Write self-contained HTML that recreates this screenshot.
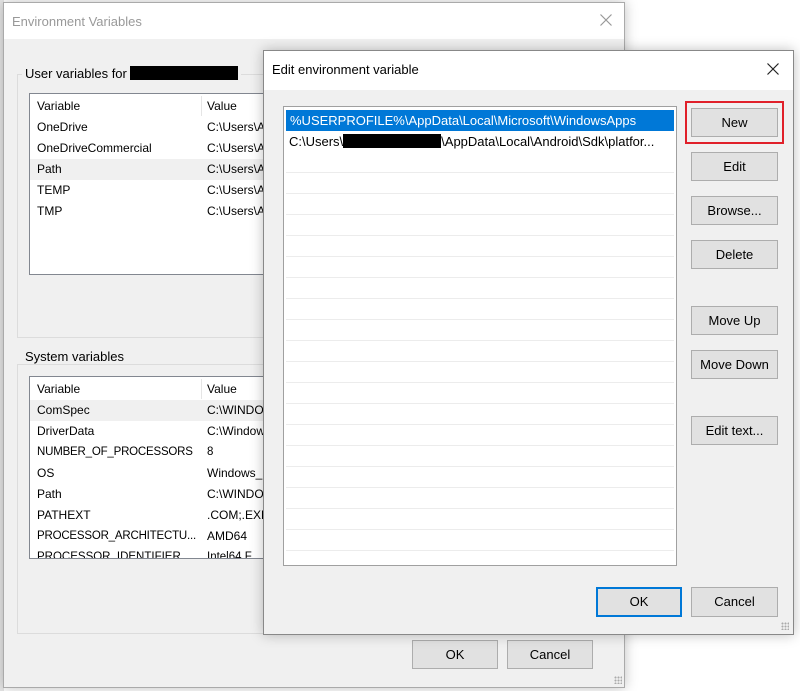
<!DOCTYPE html>
<html><head><meta charset="utf-8"><style>
*{box-sizing:border-box;margin:0;padding:0}
body{width:800px;height:691px;background:#fff;position:relative;overflow:hidden;font-family:"Liberation Sans",sans-serif;font-size:12px;color:#000}
.abs{position:absolute}
.win{background:#f0f0f0;border:1px solid #aaa;box-shadow:0 0 12px rgba(0,0,0,.25)}
.title{position:absolute;left:0;right:0;top:0;background:#fff}
.btn{position:absolute;background:#e1e1e1;border:1px solid #adadad;text-align:center;font-size:13px}
.list{position:absolute;background:#fff;border:1px solid #828790;overflow:hidden}
.row{position:absolute;left:0;right:0;height:21px;line-height:21px;white-space:nowrap}
.grp{position:absolute;border:1px solid #dcdcdc}
.lbl{position:absolute;background:#f0f0f0;padding:0 3px;font-size:13px}
.grip{position:absolute;width:8px;height:8px;background:radial-gradient(circle,#aaa 0.8px,transparent 1.2px) 0 0/3px 3px}
</style></head><body>
<div class="abs" style="left:0;top:0;width:4px;height:691px;background:#e6e6e6"></div>

<!-- back window -->
<div class="abs win" style="left:3px;top:2px;width:622px;height:686px">
  <div class="title" style="height:36px">
    <div class="abs" style="left:8px;top:11px;font-size:13px;color:#999">Environment Variables</div>
    <svg class="abs" style="left:596px;top:11px" width="12" height="12"><path d="M0.5 0.5L11.5 11.5M11.5 0.5L0.5 11.5" stroke="#999" stroke-width="1.2"/></svg>
  </div>
  <div class="grp" style="left:13px;top:71px;width:600px;height:264px"></div>
  <div class="lbl" style="left:18px;top:63px">User variables for <span style="display:inline-block;width:108px;height:14px;background:#000;vertical-align:-2px"></span></div>
  <div class="list" style="left:25px;top:90px;width:300px;height:182px">
    <div class="row" style="top:2px;padding-left:7px">Variable</div>
    <div class="abs" style="left:171px;top:2px;width:1px;height:20px;background:#e5e5e5"></div>
    <div class="row" style="top:2px;left:177px">Value</div>
    <div class="row" style="top:23px;padding-left:7px">OneDrive<span class="abs" style="left:177px">C:\Users\A</span></div>
    <div class="row" style="top:44px;padding-left:7px">OneDriveCommercial<span class="abs" style="left:177px">C:\Users\A</span></div>
    <div class="row" style="top:65px;padding-left:7px;background:#f0f0f0">Path<span class="abs" style="left:177px">C:\Users\A</span></div>
    <div class="row" style="top:86px;padding-left:7px">TEMP<span class="abs" style="left:177px">C:\Users\A</span></div>
    <div class="row" style="top:107px;padding-left:7px">TMP<span class="abs" style="left:177px">C:\Users\A</span></div>
  </div>
  <div class="grp" style="left:13px;top:361px;width:600px;height:270px"></div>
  <div class="lbl" style="left:18px;top:346px">System variables</div>
  <div class="list" style="left:25px;top:373px;width:300px;height:183px">
    <div class="row" style="top:2px;padding-left:7px">Variable</div>
    <div class="abs" style="left:171px;top:2px;width:1px;height:20px;background:#e5e5e5"></div>
    <div class="row" style="top:2px;left:177px">Value</div>
    <div class="row" style="top:23px;padding-left:7px;background:#f0f0f0">ComSpec<span class="abs" style="left:177px">C:\WINDO</span></div>
    <div class="row" style="top:44px;padding-left:7px">DriverData<span class="abs" style="left:177px">C:\Window</span></div>
    <div class="row" style="top:65px;padding-left:7px;font-size:11.5px;letter-spacing:-0.2px">NUMBER_OF_PROCESSORS<span class="abs" style="left:177px">8</span></div>
    <div class="row" style="top:86px;padding-left:7px">OS<span class="abs" style="left:177px">Windows_</span></div>
    <div class="row" style="top:107px;padding-left:7px">Path<span class="abs" style="left:177px">C:\WINDO</span></div>
    <div class="row" style="top:128px;padding-left:7px">PATHEXT<span class="abs" style="left:177px">.COM;.EXE</span></div>
    <div class="row" style="top:149px;padding-left:7px;font-size:11.5px;letter-spacing:-0.2px">PROCESSOR_ARCHITECTU...<span class="abs" style="left:177px;font-size:12px;letter-spacing:0">AMD64</span></div>
    <div class="row" style="top:170px;padding-left:7px;font-size:11.5px">PROCESSOR_IDENTIFIER<span class="abs" style="left:177px">Intel64 F</span></div>
  </div>
  <div class="btn" style="left:408px;top:637px;width:86px;height:29px;line-height:27px">OK</div>
  <div class="btn" style="left:503px;top:637px;width:86px;height:29px;line-height:27px">Cancel</div>
  <div class="grip" style="left:610px;top:673px"></div>
</div>

<!-- front dialog -->
<div class="abs win" style="left:263px;top:50px;width:531px;height:585px;border-color:#888">
  <div class="title" style="height:39px">
    <div class="abs" style="left:8px;top:11px;font-size:13px">Edit environment variable</div>
    <svg class="abs" style="left:503px;top:12px" width="12" height="12"><path d="M0.5 0.5L11.5 11.5M11.5 0.5L0.5 11.5" stroke="#222" stroke-width="1.2"/></svg>
  </div>
  <div class="list" style="left:19px;top:55px;width:394px;height:460px;border-color:#a0a0a0">
    <div class="row" style="top:3px;left:2px;right:2px;background:#0078d7;color:#fff;padding-left:4px;font-size:13px">%USERPROFILE%\AppData\Local\Microsoft\WindowsApps</div>
    <div class="row" style="top:24px;padding-left:5px;font-size:13px">C:\Users\<span style="display:inline-block;width:98px;height:14px;background:#000;vertical-align:-2px"></span>\AppData\Local\Android\Sdk\platfor...</div>
    <div style="position:absolute;left:2px;right:2px;top:45px;bottom:0;background:repeating-linear-gradient(#fff 0 20px,#ececec 20px 21px)"></div>
  </div>
  <div class="abs" style="left:421px;top:50px;width:99px;height:43px;border:2px solid #e0202a"></div>
  <div class="btn" style="left:427px;top:57px;width:87px;height:29px;line-height:27px">New</div>
  <div class="btn" style="left:427px;top:101px;width:87px;height:29px;line-height:27px">Edit</div>
  <div class="btn" style="left:427px;top:145px;width:87px;height:29px;line-height:27px">Browse...</div>
  <div class="btn" style="left:427px;top:189px;width:87px;height:29px;line-height:27px">Delete</div>
  <div class="btn" style="left:427px;top:255px;width:87px;height:29px;line-height:27px">Move Up</div>
  <div class="btn" style="left:427px;top:299px;width:87px;height:29px;line-height:27px">Move Down</div>
  <div class="btn" style="left:427px;top:365px;width:87px;height:29px;line-height:27px">Edit text...</div>
  <div class="btn" style="left:332px;top:536px;width:86px;height:30px;line-height:26px;border:2px solid #0078d7">OK</div>
  <div class="btn" style="left:427px;top:536px;width:87px;height:30px;line-height:28px">Cancel</div>
  <div class="grip" style="left:517px;top:571px"></div>
</div>
</body></html>
